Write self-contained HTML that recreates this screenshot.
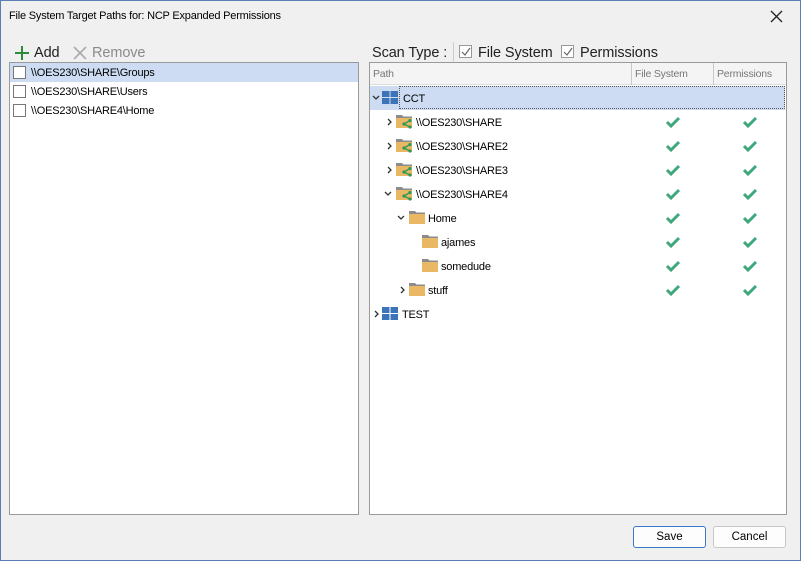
<!DOCTYPE html>
<html><head><meta charset="utf-8"><style>
*{margin:0;padding:0;box-sizing:border-box}
body{width:801px;height:561px;background:#f0f0f0;font-family:"Liberation Sans",sans-serif;font-size:11px;letter-spacing:-0.2px;color:#000;position:relative;overflow:hidden}
.frame{position:absolute;left:0;top:0;width:801px;height:561px;border:1px solid #5b7fb5}
.a{position:absolute;white-space:nowrap}
.box{position:absolute;background:#fff;border:1px solid #9a9a9a}
.cb{position:absolute;width:13px;height:13px;border:1px solid #777;background:#fff}
.row{position:absolute;left:370px;width:415px;height:24px}
.btn{position:absolute;height:22px;border:1px solid #c8c8c8;border-radius:3px;background:#fdfdfd;text-align:center;line-height:20px;font-size:11.5px;letter-spacing:0}
.big{font-size:14.5px;letter-spacing:-0.1px;color:#222}
.t{position:absolute;white-space:nowrap;margin-top:1px}
</style></head><body>
<div class="frame"></div>
<div class="a" style="left:9px;top:10px;font-size:11px">File System Target Paths for: NCP Expanded Permissions</div>
<svg class="a" style="left:770px;top:10px" width="13" height="13"><path d="M1 1L12 12M12 1L1 12" stroke="#222" stroke-width="1.3"/></svg>

<svg class="a" style="left:15px;top:46px" width="14" height="14"><path d="M7 0V14M0 7H14" stroke="#2e8b3e" stroke-width="2"/></svg>
<div class="a big" style="left:34px;top:45px">Add</div>
<svg class="a" style="left:73px;top:46px" width="14" height="14"><path d="M1 1L13 13M13 1L1 13" stroke="#aaa" stroke-width="1.6"/></svg>
<div class="a big" style="left:92px;top:45px;color:#8a8a8a">Remove</div>

<div class="box" style="left:9px;top:62px;width:350px;height:453px">
 <div class="a" style="left:0;top:0;width:348px;height:19px;background:#cddcf3"></div>
 <div class="cb" style="left:3px;top:3px"></div><div class="a" style="left:21px;top:4px">\\OES230\SHARE\Groups</div>
 <div class="cb" style="left:3px;top:22px"></div><div class="a" style="left:21px;top:23px">\\OES230\SHARE\Users</div>
 <div class="cb" style="left:3px;top:41px"></div><div class="a" style="left:21px;top:42px">\\OES230\SHARE4\Home</div>
</div>

<div class="a big" style="left:372px;top:45px">Scan Type :</div>
<div class="a" style="left:453px;top:42px;width:1px;height:22px;background:#ccc"></div>
<div class="cb" style="left:459px;top:45px;border-color:#999"></div>
<svg class="a" style="left:461px;top:47px" width="10" height="10"><path d="M1 5L4 8L9 1" stroke="#666" fill="none" stroke-width="1.2"/></svg>
<div class="a big" style="left:478px;top:45px">File System</div>
<div class="cb" style="left:561px;top:45px;border-color:#999"></div>
<svg class="a" style="left:563px;top:47px" width="10" height="10"><path d="M1 5L4 8L9 1" stroke="#666" fill="none" stroke-width="1.2"/></svg>
<div class="a big" style="left:580px;top:45px">Permissions</div>

<div class="box" style="left:369px;top:62px;width:418px;height:453px"></div>
<div class="a" style="left:370px;top:63px;width:416px;height:22px;background:#f4f4f4;border-bottom:1px solid #ddd"></div>
<div class="a" style="left:631px;top:63px;width:1px;height:22px;background:#c8c8c8"></div>
<div class="a" style="left:713px;top:63px;width:1px;height:22px;background:#c8c8c8"></div>
<div class="a" style="left:373px;top:68px;font-size:10.5px;color:#777">Path</div>
<div class="a" style="left:635px;top:68px;font-size:10.5px;color:#777">File System</div>
<div class="a" style="left:717px;top:68px;font-size:10.5px;color:#777">Permissions</div>

<div class="row" style="top:86px;background:#cddcf3"></div>
<div class="a" style="left:399px;top:86px;width:386px;height:23px;border:1px dotted #555"></div>

<svg width="801" height="561" class="a" style="left:0;top:0">
<defs>
 <g id="win"><rect x="0" y="0" width="7.5" height="6" fill="#3d74b8"/><rect x="8.5" y="0" width="7.5" height="6" fill="#3d74b8"/><rect x="0" y="7" width="7.5" height="6" fill="#3d74b8"/><rect x="8.5" y="7" width="7.5" height="6" fill="#3d74b8"/></g>
 <g id="fold"><path d="M0 0H6L7.5 1.5H16V3H0Z" fill="#8c8c8c"/><rect x="0" y="3" width="16" height="10" fill="#eab865"/></g>
 <g id="sfold"><path d="M0 0H6L7.5 1.5H16V3H0Z" fill="#8c8c8c"/><rect x="0" y="3" width="16" height="10" fill="#eab865"/><path d="M8 9L14 5.5M8 9L14 12" stroke="#2e9a5a" stroke-width="1.4"/><circle cx="8" cy="9" r="1.6" fill="#2e9a5a"/><circle cx="14" cy="5.5" r="1.6" fill="#2e9a5a"/><circle cx="14" cy="12" r="1.6" fill="#2e9a5a"/></g>
 <path id="cr" d="M0 0L3 3L0 6" stroke="#333" fill="none" stroke-width="1.3"/>
 <path id="cd" d="M0 0L3 3L6 0" stroke="#333" fill="none" stroke-width="1.3"/>
 <path id="ck" d="M1 6L5 10L13 2" stroke="#3fa87a" fill="none" stroke-width="3"/>
</defs>
<use href="#cd" x="373" y="96"/><use href="#win" x="382" y="91"/>
<use href="#cr" x="388" y="119"/><use href="#sfold" x="396" y="115"/>
<use href="#cr" x="388" y="143"/><use href="#sfold" x="396" y="139"/>
<use href="#cr" x="388" y="167"/><use href="#sfold" x="396" y="163"/>
<use href="#cd" x="385" y="192"/><use href="#sfold" x="396" y="187"/>
<use href="#cd" x="398" y="216"/><use href="#fold" x="409" y="211"/>
<use href="#fold" x="422" y="235"/>
<use href="#fold" x="422" y="259"/>
<use href="#cr" x="401" y="287"/><use href="#fold" x="409" y="283"/>
<use href="#cr" x="375" y="311"/><use href="#win" x="382" y="307"/>
<g>
<use href="#ck" x="666" y="116"/><use href="#ck" x="743" y="116"/>
<use href="#ck" x="666" y="140"/><use href="#ck" x="743" y="140"/>
<use href="#ck" x="666" y="164"/><use href="#ck" x="743" y="164"/>
<use href="#ck" x="666" y="188"/><use href="#ck" x="743" y="188"/>
<use href="#ck" x="666" y="212"/><use href="#ck" x="743" y="212"/>
<use href="#ck" x="666" y="236"/><use href="#ck" x="743" y="236"/>
<use href="#ck" x="666" y="260"/><use href="#ck" x="743" y="260"/>
<use href="#ck" x="666" y="284"/><use href="#ck" x="743" y="284"/>
</g>
</svg>
<div class="t" style="left:403px;top:92px">CCT</div>
<div class="t" style="left:416px;top:116px">\\OES230\SHARE</div>
<div class="t" style="left:416px;top:140px">\\OES230\SHARE2</div>
<div class="t" style="left:416px;top:164px">\\OES230\SHARE3</div>
<div class="t" style="left:416px;top:188px">\\OES230\SHARE4</div>
<div class="t" style="left:428px;top:212px">Home</div>
<div class="t" style="left:441px;top:236px">ajames</div>
<div class="t" style="left:441px;top:260px">somedude</div>
<div class="t" style="left:428px;top:284px">stuff</div>
<div class="t" style="left:402px;top:308px">TEST</div>

<div class="btn" style="left:633px;top:526px;width:73px;border-color:#3a78c9">Save</div>
<div class="btn" style="left:713px;top:526px;width:73px">Cancel</div>
</body></html>
